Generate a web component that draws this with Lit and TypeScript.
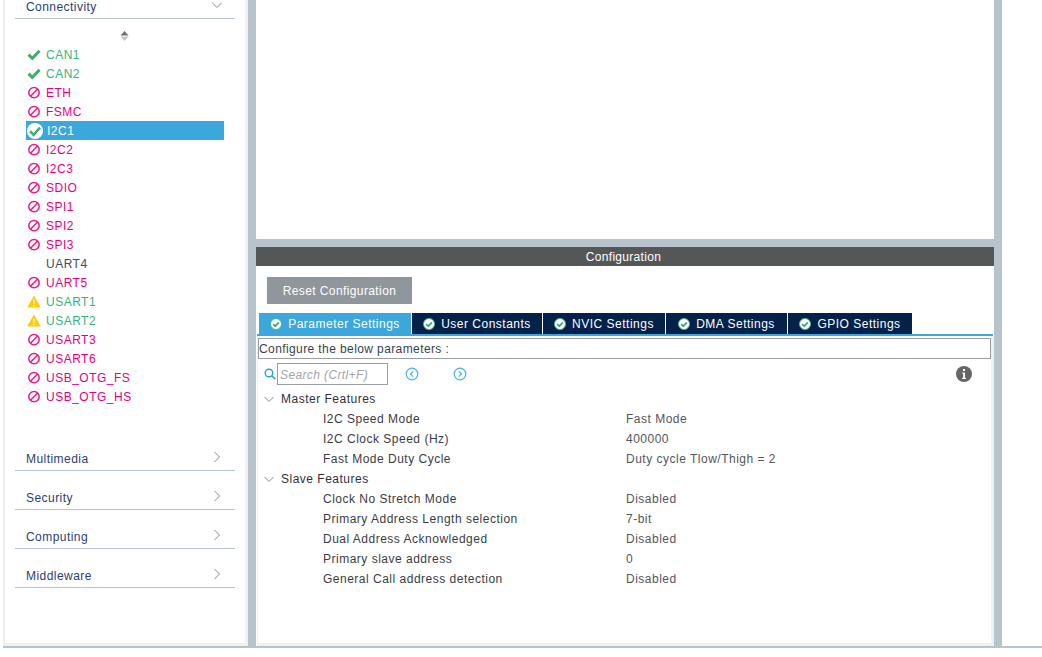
import { LitElement, html, css, svg } from "lit";
import { customElement } from "lit/decorators.js";

type Status = "ok" | "ban" | "warn" | "none" | "sel";
const peripherals: [string, Status][] = [
  ["CAN1", "ok"], ["CAN2", "ok"], ["ETH", "ban"], ["FSMC", "ban"], ["I2C1", "sel"], ["I2C2", "ban"],
  ["I2C3", "ban"], ["SDIO", "ban"], ["SPI1", "ban"], ["SPI2", "ban"], ["SPI3", "ban"], ["UART4", "none"],
  ["UART5", "ban"], ["USART1", "warn"], ["USART2", "warn"], ["USART3", "ban"], ["USART6", "ban"],
  ["USB_OTG_FS", "ban"], ["USB_OTG_HS", "ban"],
];
const groups: [string, [string, string][]][] = [
  ["Master Features", [["I2C Speed Mode", "Fast Mode"], ["I2C Clock Speed (Hz)", "400000"], ["Fast Mode Duty Cycle", "Duty cycle Tlow/Thigh = 2"]]],
  ["Slave Features", [["Clock No Stretch Mode", "Disabled"], ["Primary Address Length selection", "7-bit"], ["Dual Address Acknowledged", "Disabled"], ["Primary slave address", "0"], ["General Call address detection", "Disabled"]]],
];
const tabs = ["Parameter Settings", "User Constants", "NVIC Settings", "DMA Settings", "GPIO Settings"];

function statusIcon(s: Status) {
  if (s === "ok") return html`<svg class="ic" viewBox="0 0 14 14"><path d="M1.5 6.6 L5.3 10.4 L12.6 2.8" fill="none" stroke="#41ad6f" stroke-width="3"/></svg>`;
  if (s === "ban") return html`<svg class="ic" viewBox="0 0 14 14"><circle cx="7" cy="6.6" r="5.2" fill="none" stroke="#ec1a83" stroke-width="1.5"/><path d="M3.4 10.2 L10.6 3" stroke="#ec1a83" stroke-width="1.5"/></svg>`;
  if (s === "warn") return html`<svg class="ic" viewBox="0 0 14 14"><path d="M7 .4 L13.8 12.6 H.2 Z" fill="#ffcb05"/><path d="M7 4.6 V8.8 M7 9.9 V11.3" stroke="#fff" stroke-width="1.3"/></svg>`;
  if (s === "sel") return html`<svg class="ic big" viewBox="0 0 16 16"><circle cx="8" cy="8" r="8" fill="#fff"/><path d="M3 8.2 L6.6 11.8 L13 4.6" fill="none" stroke="#41ad6f" stroke-width="2.6"/></svg>`;
  return html`<span class="ic"></span>`;
}
const tabCheck = svg`<circle cx="6" cy="6" r="5.5" fill="#fff"/><circle cx="6" cy="6" r="5.5" fill="none" stroke="#4fb286" stroke-width="1"/><path d="M3.2 6.1 L5.3 8.2 L8.9 4.3" fill="none" stroke="#3fa877" stroke-width="1.7"/>`;

@customElement("app-root")
export class AppRoot extends LitElement {
  static styles = css`
    :host { display: block; width: 1042px; height: 657px; overflow: hidden; background: #fff;
      font-family: "Liberation Sans", Arial, sans-serif; font-size: 12px; }
    .main { display: flex; height: 646px; padding-left: 3px; }
    .bar { height: 2px; margin-left: 3px; background: #b8c4cb; }
    .side { width: 220px; flex: none; background: #fff; border: solid #eff0f1; border-width: 0 3px 3px 2px; padding: 0 10px; box-sizing: content-box; height: 643px; }
    .gutter { width: 8px; flex: none; background: #b8c4cb; }
    .center { width: 738px; flex: none; display: flex; flex-direction: column; }
    .top { height: 239px; background: #fff; flex: none; }
    .hgut { height: 8px; background: #b8c4cb; flex: none; }
    .cfg-head { height: 19px; flex: none; background: #555756; color: #fff; text-align: center; line-height: 20px; letter-spacing: .3px; padding-right: 3px; box-sizing: border-box; }
    .body { flex: 1; background: #fff; display: flex; flex-direction: column; min-height: 0; }
    .sec { display: flex; align-items: center; justify-content: space-between; border-bottom: 1px solid #b8c4cb; padding: 0 13px 0 11px; color: #2c3e6e; font-size: 12px; letter-spacing: .45px; }
    .sec svg { width: 10px; height: 10px; }
    .sec.first { height: 18px; align-items: flex-start; }
    .sec.first span { line-height: 14px; }
    .sec.coll { align-items: flex-end; padding-bottom: 4px; box-sizing: border-box; height: 39px; }
    .sec.coll svg { margin-bottom: 4px; }
    .sort { display: flex; justify-content: center; height: 26px; padding-top: 12px; box-sizing: border-box; padding-right: 2px; }
    .sort svg { width: 9px; height: 10px; }
    .list { width: 198px; margin-left: 11px; }
    .row { height: 19px; display: flex; align-items: center; font-size: 12px; letter-spacing: .5px; gap: 5px; }
    .ic { width: 14px; height: 14px; flex: none; margin-left: 1px; display: block; }
    .ic.big { width: 16px; height: 16px; margin-left: 1px; margin-right: -1px; }
    .ok, .warn { color: #38b17c; }
    .ban { color: #e6007e; }
    .none { color: #3f4a63; }
    .sel { background: #3ba7dc; color: #fff; }
    .spacer { height: 26px; }
    .actions { height: 47px; padding: 11px 0 0 11px; box-sizing: border-box; flex: none; }
    .reset { width: 145px; height: 27px; background: #8f969c; color: #fff; border: 0; padding: 0; font: inherit; letter-spacing: .4px; display: block; }
    .tabs { display: flex; gap: 1px; padding-left: 3px; height: 21px; flex: none; }
    .tab { background: #04214a; color: #fff; display: flex; align-items: center; justify-content: center; gap: 6px; letter-spacing: .5px; box-sizing: border-box; }
    .tab svg { width: 12px; height: 12px; }
    .tab.on { background: #3ba7dc; }
    .panel { flex: 1; min-height: 0; margin: 0 1px 0 1px; border-top: 2px solid #3ba7dc; display: flex; flex-direction: column; }
    .panel-in { flex: 1; min-height: 0; border: solid #eff0f1; border-width: 0 3px 3px 1px; padding-top: 2px; margin-right: -1px; display: flex; flex-direction: column; }
    .note { height: 21px; border: 1px solid #9a9ea3; box-sizing: border-box; line-height: 20px; color: #3a3f4a; letter-spacing: .4px; flex: none; }
    .tools { height: 28px; display: flex; align-items: center; padding: 2px 19px 0 6px; box-sizing: border-box; flex: none; }
    .tools .mag { width: 12px; height: 12px; flex: none; }
    .search { width: 111px; height: 22px; border: 1px solid #9a9ea3; box-sizing: border-box; margin-left: 1px; line-height: 22px; padding-left: 2px; color: #a2a4a8; font-style: italic; letter-spacing: .38px; }
    .nav { width: 14px; height: 14px; flex: none; margin-left: 17px; }
    .nav + .nav { margin-left: 34px; }
    .info { width: 16px; height: 16px; margin-left: auto; }
    .tree { padding-top: 2px; }
    .gr, .it { height: 20px; display: flex; align-items: center; letter-spacing: .5px; color: #2f3137; }
    .gr svg { width: 10px; height: 10px; margin: 0 7px 0 6px; flex: none; }
    .it { padding-left: 65px; color: #3a3c42; }
    .it .k { width: 303px; flex: none; }
    .it .v { color: #54565b; }
  `;

  render() {
    const down = html`<svg viewBox="0 0 10 10"><path d="M0 2.5 L5 7.5 L10 2.5" fill="none" stroke="#85898d" stroke-width="1"/></svg>`;
    const right = html`<svg viewBox="0 0 10 10"><path d="M2.5 0 L7.5 5 L2.5 10" fill="none" stroke="#85898d" stroke-width="1"/></svg>`;
    const w = [152, 130, 122, 121, 124];
    return html`
      <div class="main">
        <aside class="side">
          <div class="sec first"><span>Connectivity</span>${down}</div>
          <div class="sort"><svg viewBox="0 0 9 10"><path d="M4.5 0 L8.5 4.4 H.5 Z" fill="#6d7072"/><path d="M4.5 10 L8.5 5.6 H.5 Z" fill="#c4c7c9"/></svg></div>
          <div class="list">
            ${peripherals.map(([n, s]) => html`<div class="row ${s}">${statusIcon(s)}<span>${n}</span></div>`)}
          </div>
          <div class="spacer"></div>
          ${["Multimedia", "Security", "Computing", "Middleware"].map((n) => html`<div class="sec coll"><span>${n}</span>${right}</div>`)}
        </aside>
        <div class="gutter"></div>
        <div class="center">
          <div class="top"></div>
          <div class="hgut"></div>
          <div class="cfg-head">Configuration</div>
          <div class="body">
            <div class="actions"><button class="reset">Reset Configuration</button></div>
            <div class="tabs">
              ${tabs.map((t, i) => html`<div class="tab ${i === 0 ? "on" : ""}" style="width:${w[i]}px"><svg viewBox="0 0 12 12">${tabCheck}</svg><span>${t}</span></div>`)}
            </div>
            <div class="panel">
              <div class="panel-in">
                <div class="note">Configure the below parameters :</div>
                <div class="tools">
                  <svg class="mag" viewBox="0 0 12 12"><circle cx="5" cy="5" r="3.8" fill="none" stroke="#2f9fd8" stroke-width="1.4"/><path d="M7.8 7.8 L11.3 11.3" stroke="#2f9fd8" stroke-width="1.6"/></svg>
                  <div class="search">Search (Crtl+F)</div>
                  <svg class="nav" viewBox="0 0 14 14"><circle cx="7" cy="7" r="5.8" fill="none" stroke="#45b0e6" stroke-width="1.2"/><path d="M8.2 4.4 L5.4 7 L8.2 9.6" fill="none" stroke="#45b0e6" stroke-width="1.2"/></svg>
                  <svg class="nav" viewBox="0 0 14 14"><circle cx="7" cy="7" r="5.8" fill="none" stroke="#45b0e6" stroke-width="1.2"/><path d="M5.8 4.4 L8.6 7 L5.8 9.6" fill="none" stroke="#45b0e6" stroke-width="1.2"/></svg>
                  <svg class="info" viewBox="0 0 16 16"><circle cx="8" cy="8" r="8" fill="#666"/><rect x="7" y="3" width="2" height="2" fill="#fff"/><path d="M6.4 6.6 H9 V11.8 H10 V13 H6.2 V11.8 H7.2 V7.8 H6.4 Z" fill="#fff"/></svg>
                </div>
                <div class="tree">
                  ${groups.map(([g, items]) => html`
                    <div class="gr"><svg viewBox="0 0 10 10"><path d="M.5 3 L5 7.5 L9.5 3" fill="none" stroke="#85898d" stroke-width="1"/></svg><span>${g}</span></div>
                    ${items.map(([k, v]) => html`<div class="it"><span class="k">${k}</span><span class="v">${v}</span></div>`)}
                  `)}
                </div>
              </div>
            </div>
          </div>
        </div>
        <div class="gutter"></div>
      </div>
      <div class="bar"></div>
    `;
  }
}
